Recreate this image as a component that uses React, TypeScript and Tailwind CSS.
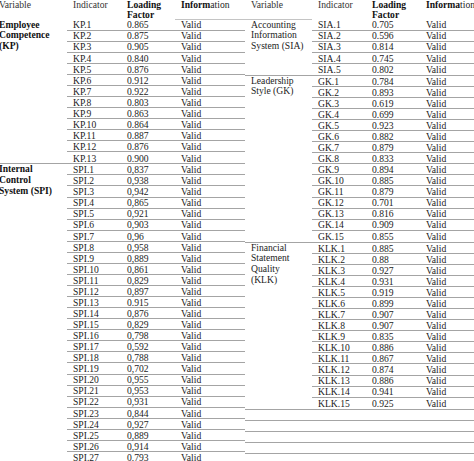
type Group = {
    name: string[];
    prefix: string;
    values: string[];
};

const leftGroups: Group[] = [
    {
        name: ['Employee', 'Competence', '(KP)'],
        prefix: 'KP',
        values: ['0.865', '0.875', '0.905', '0.840', '0.876', '0.912', '0.922', '0.803', '0.863', '0.864', '0.887', '0.876', '0.900'],
    },
    {
        name: ['Internal', 'Control', 'System (SPI)'],
        prefix: 'SPI',
        values: [
            '0,837', '0,938', '0,942', '0,865', '0,921', '0,903', '0,96', '0,958', '0,889', '0,861', '0,829', '0,897', '0.915', '0,876',
            '0,829', '0,798', '0,592', '0,788', '0,702', '0,955', '0,953', '0,931', '0,844', '0,927', '0,889', '0,914', '0,793',
        ],
    },
];

const rightGroups: Group[] = [
    {
        name: ['Accounting', 'Information', 'System (SIA)'],
        prefix: 'SIA',
        values: ['0.705', '0.596', '0.814', '0.745', '0.802'],
    },
    {
        name: ['Leadership', 'Style (GK)'],
        prefix: 'GK',
        values: ['0.784', '0.893', '0.619', '0.699', '0.923', '0.882', '0.879', '0.833', '0.894', '0.885', '0.879', '0.701', '0.816', '0.909', '0.855'],
    },
    {
        name: ['Financial', 'Statement', 'Quality', '(KLK)'],
        prefix: 'KLK',
        values: ['0.885', '0.88', '0.927', '0.931', '0.919', '0.899', '0.907', '0.907', '0.835', '0.886', '0.867', '0.874', '0.886', '0.941', '0.925'],
    },
];

// the left column of each half is a bit wider on the left side since the crop eats into it
function GroupRows({ group, bold, firstWidth }: { group: Group; bold?: boolean; firstWidth: string }) {
    return (
        <div className="flex border-b border-[#a4a4a4]">
            <div className={`${firstWidth} shrink-0 pl-[6px] leading-[10.6px] ${bold ? 'font-bold text-[#111]' : ''}`}>
                {group.name.map((line) => (
                    <div key={line} className="whitespace-nowrap">
                        {line}
                    </div>
                ))}
            </div>
            <div className="flex w-[178px] shrink-0 flex-col">
                {group.values.map((v, i) => (
                    <div
                        key={i}
                        className={`flex h-[11.07px] items-center pt-[0.6px] leading-[9px] ${i < group.values.length - 1 ? 'border-b border-[#a4a4a4]' : ''}`}
                    >
                        <div className="w-[54px] shrink-0 pl-[6px]">
                            {group.prefix}.{i + 1}
                        </div>
                        <div className="w-[54px] shrink-0 pl-[6px]">{v}</div>
                        <div className="w-[70px] shrink-0 pl-[6px]">Valid</div>
                    </div>
                ))}
            </div>
        </div>
    );
}

function Header({ firstWidth, boldPart, rest, lineOnFirst }: { firstWidth: string; boldPart: string; rest: string; lineOnFirst?: boolean }) {
    return (
        <div className="flex h-[19.5px] leading-[9.6px]">
            <div className={`${firstWidth} shrink-0 pl-[6px] text-[#333] ${lineOnFirst ? 'border-b border-[#c4c4c4]' : ''}`}>Variable</div>
            <div className="w-[54px] shrink-0 pl-[6px] text-[#333]">Indicator</div>
            <div className="w-[54px] shrink-0 pl-[6px] font-bold text-[#111]">
                Loading
                <br />
                Factor
            </div>
            <div className={`w-[70px] shrink-0 whitespace-nowrap pl-[6px] ${lineOnFirst ? '' : 'border-b border-[#c4c4c4]'}`}>
                <span className="font-bold text-[#111]">{boldPart}</span>
                {rest}
            </div>
        </div>
    );
}

export default function App() {
    return (
        <div
            className="h-[461px] w-[474px] overflow-hidden bg-white text-[9.6px] text-[#1c1c1c]"
            style={{ fontFamily: '"Liberation Serif", "Times New Roman", serif' }}
        >
            <div className="ml-[-7px] flex w-[497px] items-start">
                <div className="w-[252px] shrink-0">
                    <Header firstWidth="w-[74px]" boldPart="Inform" rest="ation" />
                    {leftGroups.map((g) => (
                        <GroupRows key={g.prefix} group={g} bold firstWidth="w-[74px]" />
                    ))}
                </div>
                <div className="w-[245px] shrink-0">
                    <Header firstWidth="w-[67px]" boldPart="Informa" rest="tion" lineOnFirst />
                    {rightGroups.map((g) => (
                        <GroupRows key={g.prefix} group={g} firstWidth="w-[67px]" />
                    ))}
                    {[0, 1, 2, 3, 4].map((i) => (
                        <div key={i} className="h-[11.07px] border-b border-[#a4a4a4]" />
                    ))}
                </div>
            </div>
        </div>
    );
}
